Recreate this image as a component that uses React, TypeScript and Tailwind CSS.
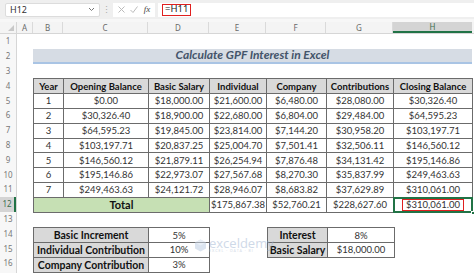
import React from 'react';

const rows = [
  ['1', '$0.00', '$18,000.00', '$21,600.00', '$6,480.00', '$28,080.00', '$30,326.40'],
  ['2', '$30,326.40', '$18,900.00', '$22,680.00', '$6,804.00', '$29,484.00', '$64,595.23'],
  ['3', '$64,595.23', '$19,845.00', '$23,814.00', '$7,144.20', '$30,958.20', '$103,197.71'],
  ['4', '$103,197.71', '$20,837.25', '$25,004.70', '$7,501.41', '$32,506.11', '$146,560.12'],
  ['5', '$146,560.12', '$21,879.11', '$26,254.94', '$7,876.48', '$34,131.42', '$195,146.86'],
  ['6', '$195,146.86', '$22,973.07', '$27,567.68', '$8,270.30', '$35,837.99', '$249,463.63'],
  ['7', '$249,463.63', '$24,121.72', '$28,946.07', '$8,683.82', '$37,629.89', '$310,061.00'],
];

const heads = ['Year', 'Opening Balance', 'Basic Salary', 'Individual', 'Company', 'Contributions', 'Closing Balance'];

// column header cells (A..G), widths follow the sheet
const colHeads = [
  { l: 'A', c: 'w-[16px]' },
  { l: 'B', c: 'w-[30px]' },
  { l: 'C', c: 'w-[85px]' },
  { l: 'D', c: 'w-[61px]' },
  { l: 'E', c: 'w-[57px]' },
  { l: 'F', c: 'w-[60px]' },
  { l: 'G', c: 'w-[67px]' },
];

const td = 'border border-[#6b6b6b] p-0 text-center leading-none';

const App: React.FC = () => {
  return (
    <div
      className="w-[474px] h-[273px] overflow-hidden bg-white relative text-[#222]"
      style={{ fontFamily: 'Lato, "Noto Sans", sans-serif' }}
    >
      {/* formula bar */}
      <div className="h-[19px] bg-[#efefef] flex items-center" style={{ fontFamily: '"Noto Sans", sans-serif' }}>
        <div className="ml-[5px] w-[95px] h-[14px] bg-white border border-[#dcdcdc] rounded-[2px] flex items-center justify-between px-[4px]">
          <span className="text-[9px] text-[#333]">H12</span>
          <svg width="7" height="5" viewBox="0 0 7 5">
            <path d="M1 1 L3.5 3.5 L6 1" stroke="#777" strokeWidth="1" fill="none" />
          </svg>
        </div>
        <div className="w-[13px] flex justify-center text-[#aaa] text-[9px]">⋮</div>
        <div className="w-[42px] h-[14px] bg-white flex items-center justify-around px-[2px]">
          <svg width="7" height="7" viewBox="0 0 7 7">
            <path d="M0.5 0.5 L6.5 6.5 M6.5 0.5 L0.5 6.5" stroke="#bbb" strokeWidth="1" />
          </svg>
          <svg width="8" height="7" viewBox="0 0 8 7">
            <path d="M0.5 4 L3 6.5 L7.5 0.5" stroke="#bbb" strokeWidth="1" fill="none" />
          </svg>
          <span className="text-[9px] italic text-[#444]" style={{ fontFamily: '"Liberation Serif", serif' }}>fx</span>
        </div>
        <div className="ml-[3px] flex-1 h-[14px] bg-white flex items-center">
          <span className="ml-[4px] border-[1.5px] border-[#e0201f] px-[2px] h-[12px] flex items-center text-[9.5px] text-[#222]">
            =H11
          </span>
        </div>
      </div>
      <div className="h-[3px] bg-[#f7f7f7]" />

      {/* column headers */}
      <div className="flex h-[12px] bg-[#f4f4f4] border-b border-[#d6d6d6] text-[8px] text-[#6a6a6a]" style={{ fontFamily: '"Noto Sans", sans-serif' }}>
        <div className="w-[17px] border-r border-[#d6d6d6] relative">
          <div className="absolute right-[2px] bottom-[2px] w-0 h-0 border-l-[6px] border-l-transparent border-b-[6px] border-b-[#c8c8c8]" />
        </div>
        {colHeads.map((h) => (
          <div key={h.l} className={`${h.c} border-r border-[#dadada] flex items-center justify-center`}>
            {h.l}
          </div>
        ))}
        <div className="w-[79px] bg-[#d4d4d4] border-b-2 border-[#217346] flex items-center justify-center text-[#3c6e4e]">H</div>
        <div className="flex-1" />
      </div>

      <div className="flex">
        {/* row headers */}
        <div className="w-[17px] flex flex-col bg-[#f7f7f7] border-r border-[#d6d6d6] text-[8px] text-[#777]" style={{ fontFamily: '"Noto Sans", sans-serif' }}>
          {Array.from({ length: 17 }, (_, i) => (
            <div
              key={i}
              className={
                i === 11
                  ? 'h-[14.8px] flex items-center justify-center bg-[#d4d4d4] border-r-2 border-[#217346] text-[#3c6e4e]'
                  : 'h-[14.8px] flex items-center justify-center'
              }
            >
              {i < 16 ? i + 1 : ''}
            </div>
          ))}
        </div>

        {/* sheet */}
        <div className="pl-[16px] flex flex-col">
          <div className="h-[14.8px]" />
          <div
            className="h-[14.8px] w-[439px] bg-[#d6dce4] border-b-2 border-[#a9c4e4] flex items-center justify-center text-[12px] font-bold italic text-[#44546a]"
          >
            Calculate GPF Interest in Excel
          </div>
          <div className="h-[14.8px]" />

          <table className="table-fixed border-collapse w-[439px] text-[9.5px]">
            <colgroup>
              <col className="w-[30px]" />
              <col className="w-[85px]" />
              <col className="w-[61px]" />
              <col className="w-[57px]" />
              <col className="w-[60px]" />
              <col className="w-[67px]" />
              <col className="w-[79px]" />
            </colgroup>
            <tbody>
              <tr className="h-[14.8px] bg-[#d9d9d9] font-bold text-[#111]">
                {heads.map((h) => (
                  <td key={h} className={td}>{h}</td>
                ))}
              </tr>
              {rows.map((r) => (
                <tr key={r[0]} className="h-[14.8px] text-[#333]">
                  {r.map((v, j) => (
                    <td key={j} className={td}>{v}</td>
                  ))}
                </tr>
              ))}
              <tr className="h-[14.8px] text-[#333]">
                <td colSpan={3} className={`${td} bg-[#c6e0b4] font-bold text-[11px] text-[#111]`}>Total</td>
                <td className={td}>$175,867.38</td>
                <td className={td}>$52,760.21</td>
                <td className={td}>$228,627.60</td>
                <td className={`${td} relative`}>
                  <div className="absolute inset-[-1px] border-2 border-[#217346]" />
                  <div className="absolute right-[-3px] bottom-[-3px] w-[4px] h-[4px] bg-[#217346] border border-white" />
                  <span className="relative inline-flex items-center h-[12px] px-[3px] border-[1.5px] border-[#e0201f]">$310,061.00</span>
                </td>
              </tr>
            </tbody>
          </table>

          <div className="h-[14.8px]" />

          <div className="flex items-start">
            <table className="table-fixed border-collapse w-[176px] text-[9.5px]">
              <colgroup>
                <col className="w-[115px]" />
                <col className="w-[61px]" />
              </colgroup>
              <tbody>
                {[
                  ['Basic Increment', '5%'],
                  ['Individual Contribution', '10%'],
                  ['Company Contribution', '3%'],
                ].map((r) => (
                  <tr key={r[0]} className="h-[14.8px]">
                    <td className={`${td} bg-[#d9d9d9] font-bold text-[10.5px] text-[#111]`}>{r[0]}</td>
                    <td className={`${td} text-[#333]`}>{r[1]}</td>
                  </tr>
                ))}
              </tbody>
            </table>
            <div className="w-[57px]" />
            <table className="table-fixed border-collapse w-[127px] text-[9.5px]">
              <colgroup>
                <col className="w-[60px]" />
                <col className="w-[67px]" />
              </colgroup>
              <tbody>
                {[
                  ['Interest', '8%'],
                  ['Basic Salary', '$18,000.00'],
                ].map((r) => (
                  <tr key={r[0]} className="h-[14.8px]">
                    <td className={`${td} bg-[#d9d9d9] font-bold text-[10.5px] text-[#111]`}>{r[0]}</td>
                    <td className={`${td} text-[#333]`}>{r[1]}</td>
                  </tr>
                ))}
              </tbody>
            </table>
          </div>
        </div>
      </div>

      {/* watermark */}
      <div className="absolute left-[194px] top-[237px] flex items-center gap-[2px] opacity-50 pointer-events-none">
        <svg width="13" height="13" viewBox="0 0 13 13">
          <path d="M6.5 0.5 L12 3.5 L12 9.5 L6.5 12.5 L1 9.5 L1 3.5 Z" fill="#b9cbe3" />
          <path d="M6.5 0.5 L12 3.5 L6.5 6.5 L1 3.5 Z" fill="#d4e0ef" />
        </svg>
        <div className="flex flex-col leading-none">
          <span className="text-[13px] text-[#9fb4d2]" style={{ fontFamily: '"Open Sans", sans-serif' }}>exceldemy</span>
          <span className="text-[3.5px] tracking-[1px] text-[#aab9cf]">EXCEL · DATA · BI</span>
        </div>
      </div>
    </div>
  );
};

export default App;
